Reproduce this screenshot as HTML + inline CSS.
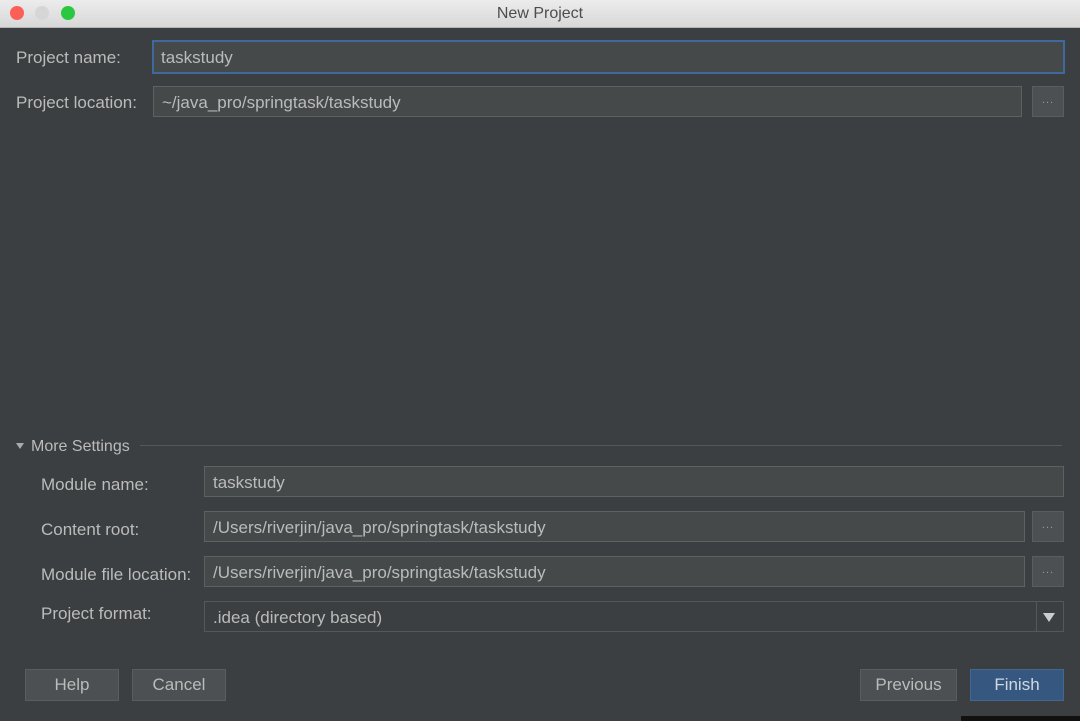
<!DOCTYPE html><html><head><style>
body{margin:0;width:1080px;height:721px;background:#3c3f41;font-family:"Liberation Sans",sans-serif;color:#bbbbbb;font-size:17px;position:relative;overflow:hidden}
.a{position:absolute}
.tb{left:0;top:0;width:1080px;height:27px;background:linear-gradient(#ececec,#d8d8d8);border-bottom:1px solid #b5b5b5;color:#4d4d4d;text-align:center;line-height:27px;font-size:16px}
.dot{top:6px;width:14px;height:14px;border-radius:50%}
.f{background:#45494a;border:1px solid #5e6162;box-sizing:border-box;padding-left:8px;line-height:31px;color:#bbbbbb}
.l{line-height:22px}
.bt{background:#4c5052;border:1px solid #5a5d5f;box-sizing:border-box;text-align:center;color:#bbbbbb;line-height:30px;font-size:17px}
.dd{color:#999;font-size:11px;text-align:center;line-height:26px;letter-spacing:1px}
</style></head><body>
<div class="a tb">New Project</div>
<div class="a dot" style="left:10px;background:#fc5f57;border:0"></div>
<div class="a dot" style="left:35px;background:#d6d6d6"></div>
<div class="a dot" style="left:61px;background:#2ac840"></div>
<div class="a l" style="left:16px;top:47px">Project name:</div>
<div class="a f" style="left:152px;top:40px;width:913px;height:34px;border:2px solid #3d6a9a;line-height:32px;padding-left:7px">taskstudy</div>
<div class="a l" style="left:16px;top:92px">Project location:</div>
<div class="a f" style="left:153px;top:86px;width:869px;height:31px">~/java_pro/springtask/taskstudy</div>
<div class="a bt dd" style="left:1032px;top:86px;width:32px;height:31px">...</div>
<div class="a" style="left:16px;top:443px;width:0;height:0;border-left:4px solid transparent;border-right:4px solid transparent;border-top:6px solid #aaa"></div>
<div class="a l" style="left:31px;top:436px;font-size:16px">More Settings</div>
<div class="a" style="left:140px;top:445px;width:922px;height:1px;background:#555859"></div>
<div class="a l" style="left:41px;top:474px">Module name:</div>
<div class="a f" style="left:204px;top:466px;width:860px;height:31px">taskstudy</div>
<div class="a l" style="left:41px;top:519px">Content root:</div>
<div class="a f" style="left:204px;top:511px;width:821px;height:31px">/Users/riverjin/java_pro/springtask/taskstudy</div>
<div class="a bt dd" style="left:1032px;top:511px;width:32px;height:31px">...</div>
<div class="a l" style="left:41px;top:564px">Module file location:</div>
<div class="a f" style="left:204px;top:556px;width:821px;height:31px">/Users/riverjin/java_pro/springtask/taskstudy</div>
<div class="a bt dd" style="left:1032px;top:556px;width:32px;height:31px">...</div>
<div class="a l" style="left:41px;top:603px">Project format:</div>
<div class="a f" style="left:204px;top:601px;width:860px;height:31px;background:#3c3f41;border-color:#555859">.idea (directory based)</div>
<div class="a" style="left:1036px;top:602px;width:1px;height:29px;background:#555859"></div>
<div class="a" style="left:1043px;top:613px;width:0;height:0;border-left:6px solid transparent;border-right:6px solid transparent;border-top:9px solid #ccc"></div>
<div class="a bt" style="left:25px;top:669px;width:94px;height:32px">Help</div>
<div class="a bt" style="left:132px;top:669px;width:94px;height:32px">Cancel</div>
<div class="a bt" style="left:860px;top:669px;width:97px;height:32px">Previous</div>
<div class="a bt" style="left:970px;top:669px;width:94px;height:32px;background:#365880;border-color:#43688f;color:#d0d8e2">Finish</div>
<div class="a" style="left:961px;top:716px;width:119px;height:5px;background:#111"></div>
</body></html>
